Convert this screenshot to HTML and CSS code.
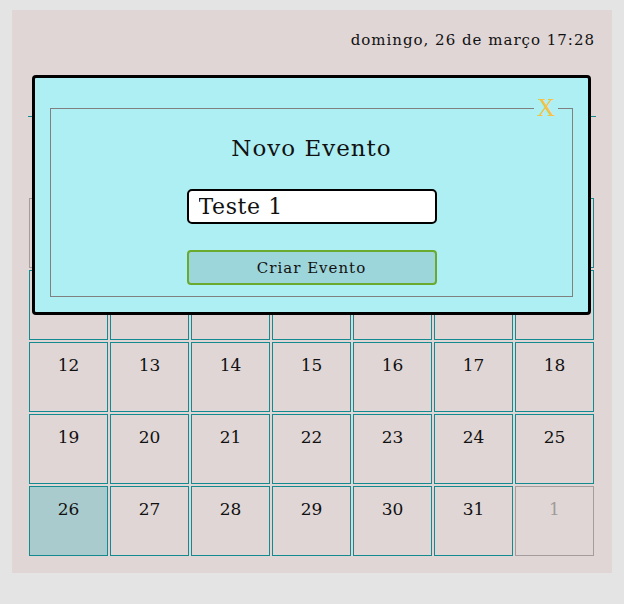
FILE: index.html
```html
<!DOCTYPE html>
<html lang="pt">
<head>
<meta charset="utf-8">
<title>Calendário</title>
<link rel="stylesheet" href="styles.css">
</head>
<body>
<div class="app">
  <div class="date">domingo, 26 de março 17:28</div>
  <div class="month-head"></div>
  <div class="weekdays"></div>
  <div class="grid">
    <div class="cell other">26</div><div class="cell other">27</div><div class="cell other">28</div><div class="cell">1</div><div class="cell">2</div><div class="cell">3</div><div class="cell">4</div>
    <div class="cell">5</div><div class="cell">6</div><div class="cell">7</div><div class="cell">8</div><div class="cell">9</div><div class="cell">10</div><div class="cell">11</div>
    <div class="cell">12</div><div class="cell">13</div><div class="cell">14</div><div class="cell">15</div><div class="cell">16</div><div class="cell">17</div><div class="cell">18</div>
    <div class="cell">19</div><div class="cell">20</div><div class="cell">21</div><div class="cell">22</div><div class="cell">23</div><div class="cell">24</div><div class="cell">25</div>
    <div class="cell today">26</div><div class="cell">27</div><div class="cell">28</div><div class="cell">29</div><div class="cell">30</div><div class="cell">31</div><div class="cell other">1</div>
  </div>

  <div class="modal">
    <fieldset class="frame">
      <legend class="close">X</legend>
      <h2 class="title">Novo Evento</h2>
      <input class="field" type="text" value="Teste 1">
      <button class="create">Criar Evento</button>
    </fieldset>
  </div>
</div>
</body>
</html>
```

FILE: styles.css
```css
* { box-sizing: border-box; }
html, body { margin: 0; padding: 0; }
body {
  background: #e4e4e4;
  padding: 10px 12px;
  font-family: "DejaVu Serif", "Liberation Serif", serif;
  color: #111;
}
.app {
  position: relative;
  width: 600px;
  height: 563px;
  background: #e0d6d6;
  padding: 20px 16px 0 16px;
}
.date {
  text-align: right;
  font-size: 15px;
  line-height: 20px;
  letter-spacing: 1px;
  padding-right: 1px;
}
.month-head {
  height: 67px;
  border-bottom: 1px solid #138a8f;
}
.weekdays {
  height: 81px;
}
.grid {
  display: grid;
  grid-template-columns: repeat(7, 79px);
  grid-auto-rows: 70px;
  gap: 2px;
  margin-left: 1px;
}
.cell {
  border: 1px solid #138a8f;
  text-align: center;
  font-size: 17px;
  line-height: 22px;
  padding-top: 11px;
}
.cell.other {
  border-color: #a59d9d;
  color: #a09a9a;
}
.cell.today {
  background: #a9cbcd;
}
.modal {
  position: absolute;
  left: 20px;
  top: 65px;
  width: 559px;
  height: 240px;
  background: #aeeff4;
  border: 3px solid #000;
  border-radius: 4px;
  padding: 20px 15px 0 15px;
}
.frame {
  margin: 0;
  height: 199px;
  border: 1px solid #808080;
  padding: 0;
  display: flex;
  flex-direction: column;
  align-items: center;
}
.close {
  margin-left: auto;
  margin-right: 14px;
  padding: 0 3px;
  color: #f5c242;
  font-size: 25px;
  line-height: 20px;
  font-family: "Liberation Serif", serif;
}
.title {
  margin: 16px 0 0 0;
  font-weight: normal;
  font-size: 23px;
  line-height: 28px;
  letter-spacing: 1px;
}
.field {
  margin-top: 27px;
  width: 250px;
  height: 35px;
  border: 2px solid #000;
  border-radius: 5px;
  background: #fff;
  font-family: inherit;
  font-size: 22px;
  padding: 0 10px;
  color: #111;
  letter-spacing: 0.6px;
}
.create {
  margin-top: 26px;
  width: 250px;
  height: 35px;
  background: #9cd5da;
  border: 2px solid #6aaa2e;
  border-radius: 4px;
  font-family: inherit;
  font-size: 15px;
  letter-spacing: 1px;
  color: #111;
}
```
